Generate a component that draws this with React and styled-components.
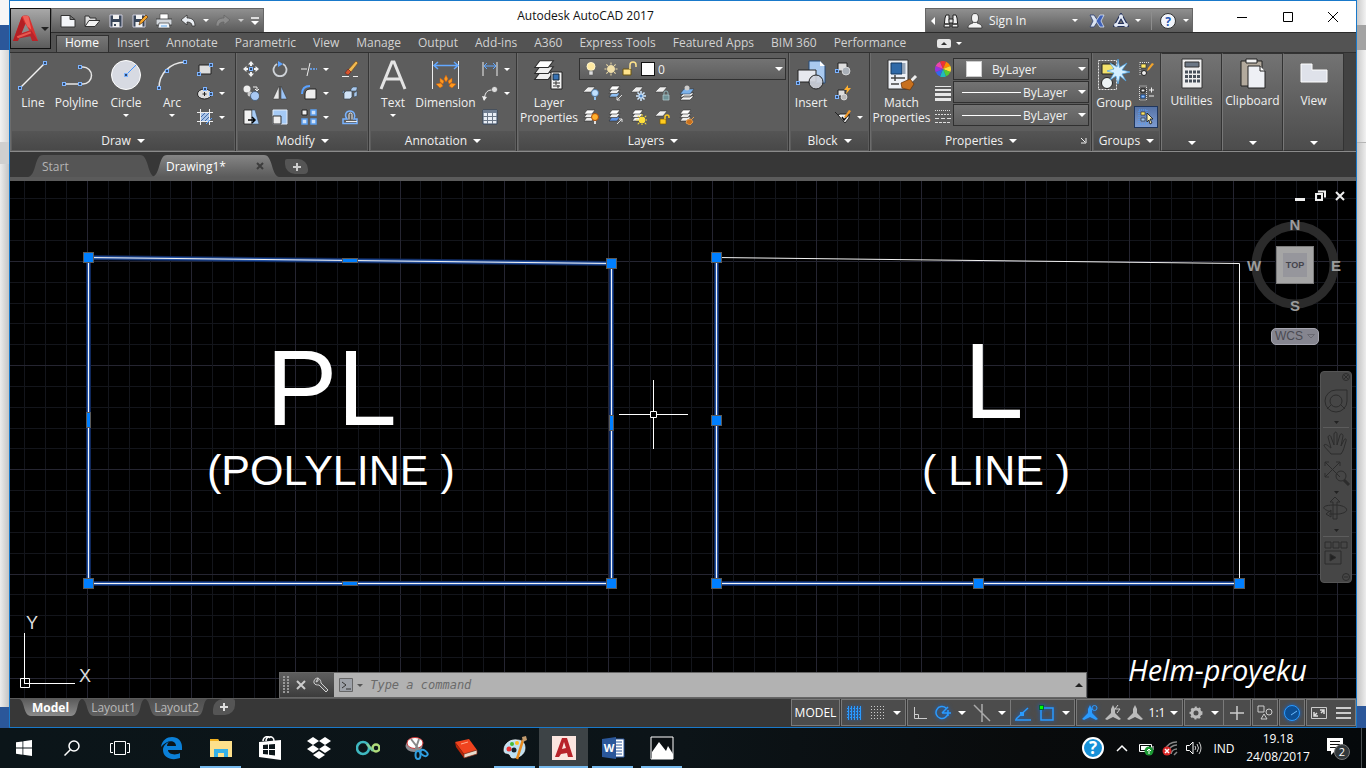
import React, { useState } from 'react';
import styled, { createGlobalStyle } from 'styled-components';

const GlobalStyle = createGlobalStyle`
  * {
    box-sizing: border-box;
  }
  body {
    margin: 0;
    font-family: "Open Sans", "Noto Sans", sans-serif;
    font-size: 12px;
    line-height: 15px;
    overflow: hidden;
  }
  button, input, select {
    font: inherit;
    color: inherit;
    margin: 0;
    padding: 0;
    border: none;
    background: none;
  }
`;

const Screen = styled.div`
  display: flex;
  flex-direction: column;
  height: 100vh;
  min-height: 600px;
`;

const Desktop = styled.div`
  flex: 1;
  display: flex;
  min-height: 0;
`;

/* slice of the word window that is still visible behind */
const Behind = styled.div`
  width: 9px;
  display: flex;
  flex-direction: column;
  background: linear-gradient(${(p) => (p.$right ? 'to left' : 'to right')}, #ececec, #c4c4c4);
`;

const Band = styled.div`
  height: ${(p) => p.$height}px;
  background: ${(p) => p.$color};
`;

const Fill = styled.div`
  flex: 1;
`;

const Window = styled.div`
  flex: 1;
  min-width: 0;
  display: flex;
  flex-direction: column;
  border: 1px solid #1979ca;
  background: #373737;
  color: #f0f0f0;
`;

const TitleBar = styled.div`
  position: relative;
  height: 32px;
  display: flex;
  align-items: flex-end;
  background: #fff;
  border-bottom: 1px solid #2b2b2b;
`;

const AppButton = styled.button`
  position: absolute;
  left: 0;
  top: 7px;
  z-index: 2;
  width: 41px;
  height: 41px;
  display: flex;
  align-items: center;
  justify-content: center;
  gap: 2px;
  border: 1px solid #111;
  background: linear-gradient(#a8a8a8, #5c5c5c);
`;

const Strip = styled.div`
  height: 24px;
  display: flex;
  align-items: center;
  color: #f4f4f4;
  border: 1px solid #666;
  border-bottom: none;
  background: linear-gradient(#909090, #5a5a5a);
`;

const QuickAccess = styled(Strip)`
  margin-left: 41px;
  padding: 0 0 0 4px;
`;

const StripButton = styled.button`
  width: ${(p) => p.$width || 24}px;
  height: 22px;
  display: flex;
  align-items: center;
  justify-content: center;
`;

const Title = styled.div`
  flex: 1;
  height: 31px;
  padding-right: 18px;
  line-height: 30px;
  text-align: center;
  white-space: nowrap;
  color: #111;
`;

const SignIn = styled.button`
  display: flex;
  align-items: center;
  width: 100px;
  padding: 0 9px 0 2px;
`;

const Divider = styled.div`
  width: 1px;
  height: 18px;
  margin: 0 4px 0 10px;
  background: #8d8d8d;
`;

const WindowControls = styled.div`
  width: 163px;
  height: 31px;
  padding-left: 26px;
  display: flex;
`;

const WindowControl = styled.button`
  flex: 1;
  display: flex;
  align-items: center;
  justify-content: center;
`;

const RibbonTabs = styled.div`
  height: 19px;
  display: flex;
  align-items: flex-end;
  padding-left: 46px;
  background: #535353;
`;

const RibbonTab = styled.button`
  height: 17px;
  padding: 0 9px 2px 8px;
  line-height: 14px;
  white-space: nowrap;
  color: ${(p) => (p.$active ? '#fff' : '#d2d2d2')};
  border: 0 solid #303030;
  border-width: ${(p) => (p.$active ? '1px 1px 0' : '1px 0 0')};
  border-color: ${(p) => (p.$active ? '#303030' : 'transparent')};
  background: ${(p) => (p.$active ? 'linear-gradient(#777, #606060)' : 'none')};
`;

const RibbonToggle = styled.button`
  display: flex;
  align-items: center;
  gap: 5px;
  height: 17px;
  margin-left: 22px;
`;

const Ribbon = styled.div`
  height: 100px;
  display: flex;
  border-top: 1px solid #303030;
  border-bottom: 1px solid #8a8a8a;
  background: #424242;
`;

const PanelBox = styled.section`
  width: ${(p) => p.$width}px;
  flex: none;
  display: flex;
  flex-direction: column;
  border-right: 1px solid #363636;
  border-left: 1px solid #6c6c6c;
  background: #5d5d5d;
`;

const PanelBody = styled.div`
  flex: 1;
  display: flex;
  padding: 0 1px;
`;

const PanelTitle = styled.button`
  position: relative;
  height: 19px;
  margin: 0 1px 1px;
  display: flex;
  align-items: center;
  justify-content: center;
  gap: 6px;
  background: linear-gradient(#555, #484848);
`;

const Launcher = styled.span`
  position: absolute;
  right: 2px;
  top: 4px;
`;

const BigButton = styled.button`
  width: ${(p) => p.$width}px;
  flex: none;
  display: flex;
  flex-direction: column;
  align-items: center;
  padding-top: 6px;
  white-space: nowrap;
`;

const BigLabel = styled.span`
  margin: 4px 0;
  white-space: pre-line;
`;

const ToolGrid = styled.div`
  display: grid;
  grid-template-columns: ${(p) => p.$columns};
  grid-auto-rows: 24px;
  align-content: start;
  padding: ${(p) => p.$top ?? 5}px 0 0 ${(p) => p.$left || 0}px;
`;

const Tool = styled.button`
  height: 22px;
  display: flex;
  align-items: center;
  gap: 6px;
  padding: 0 3px;
  border: 1px solid ${(p) => (p.$active ? '#20365c' : 'transparent')};
  background: ${(p) => (p.$active ? 'linear-gradient(#5673a6, #7d9bd0)' : 'none')};
`;

const Stack = styled.div`
  flex: 1;
  display: flex;
  flex-direction: column;
  gap: 1px;
  padding: 5px 1px 0 0;
`;

const Combo = styled.div`
  height: 22px;
  display: flex;
  align-items: center;
  gap: ${(p) => p.$gap || 3}px;
  padding: 0 2px 0 ${(p) => p.$indent || 4}px;
  border: 1px solid #303030;
  background: linear-gradient(#737373, #5e5e5e);
`;

const ComboSelect = styled.select`
  flex: 1;
  min-width: 0;
  appearance: none;
  outline: none;
`;

const Swatch = styled.span`
  width: ${(p) => p.$size}px;
  height: ${(p) => p.$size}px;
  flex: none;
  background: #fff;
  border: 1px solid ${(p) => p.$edge || '#111'};
`;

const LineSample = styled.span`
  width: 59px;
  height: 1px;
  background: #fff;
`;

const SlimPanel = styled.button`
  width: 61px;
  flex: none;
  display: flex;
  flex-direction: column;
  align-items: center;
  padding: 4px 0 5px;
  border: 1px solid #333;
  border-left-color: #777;
  background: linear-gradient(#737373, #4c4c4c);
`;

const SlimLabel = styled.span`
  margin-top: 3px;
  flex: 1;
`;

const FileTabs = styled.div`
  height: 29px;
  display: flex;
  align-items: flex-end;
  padding-left: 18px;
  border-bottom: 4px solid #5b5b5b;
  background: #373737;
`;

const FileTab = styled.div`
  width: 127px;
  height: 22px;
  display: flex;
  align-items: center;
  padding: 0 15px 0 14px;
  color: ${(p) => (p.$active ? '#fff' : '#b4b4b4')};
  background: ${(p) => (p.$active ? 'linear-gradient(#858585, #5b5b5b)' : '#555')};
  clip-path: path("M0 22 C9 20 6 0 15 0 H112 C121 0 119 20 127 22 Z");
  & + & {
    margin-left: -3px;
  }
`;

const FileTabName = styled.button`
  flex: 1;
  text-align: left;
`;

const AddFileTab = styled.button`
  width: 23px;
  height: 15px;
  margin: 0 0 3px 6px;
  display: flex;
  align-items: center;
  justify-content: center;
  background: #555;
  border-radius: 2px 10px 4px 10px;
`;

const Canvas = styled.div`
  position: relative;
  flex: 1;
  min-height: 0;
  overflow: hidden;
  background: #000;
`;

const Drawing = styled.svg`
  position: absolute;
  inset: 0;
  width: 100%;
  height: 100%;
`;

const Ucs = styled.svg`
  position: absolute;
  left: 8px;
  bottom: 9px;
`;

const CanvasControls = styled.div`
  position: absolute;
  top: 7px;
  right: 8px;
  display: flex;
  gap: 4px;
`;

const CanvasControl = styled.button`
  width: 16px;
  height: 16px;
`;

const ViewCube = styled.svg`
  position: absolute;
  top: 34px;
  right: 12px;
  font-family: "Liberation Sans", Arial, sans-serif;
  font-weight: bold;
  text-anchor: middle;
`;

const Wcs = styled.button`
  position: absolute;
  top: 147px;
  right: 37px;
  width: 48px;
  height: 17px;
  display: flex;
  align-items: center;
  justify-content: center;
  gap: 4px;
  border: 1px solid #a6a6b0;
  border-radius: 5px;
  color: #4a4a52;
  font-family: "Liberation Sans", Arial, sans-serif;
  background: #85858f;
`;

const NavBar = styled.div`
  position: absolute;
  top: 190px;
  right: 4px;
  width: 32px;
  height: 212px;
  border: 1px solid #555;
  border-radius: 4px;
  background: #464646;
`;

const Signature = styled.div`
  position: absolute;
  right: 49px;
  bottom: 10px;
  font-style: italic;
  font-size: 29px;
  line-height: 36px;
  color: #fff;
`;

const CommandLine = styled.div`
  position: absolute;
  left: 20%;
  right: 20%;
  bottom: 0;
  height: 26px;
  display: flex;
  border: 1px solid #666;
  background: linear-gradient(#5e5e5e, #3c3c3c);
`;

const CommandTools = styled.div`
  width: 54px;
  display: flex;
  align-items: center;
  gap: 7px;
  padding-left: 3px;
`;

const CommandField = styled.div`
  flex: 1;
  display: flex;
  align-items: center;
  gap: 4px;
  padding: 0 3px 0 5px;
  background: #b2b2b2;
`;

const CommandInput = styled.input`
  flex: 1;
  min-width: 0;
  margin-left: 3px;
  outline: none;
  color: #222;
  font-family: "DejaVu Sans Mono", monospace;
  font-style: italic;
  &::placeholder {
    color: #6a6a6a;
    opacity: 1;
  }
`;

const BottomBar = styled.div`
  height: 29px;
  display: flex;
  justify-content: space-between;
  border-top: 1px solid #5b5b5b;
  background: #373737;
`;

const LayoutTabs = styled.div`
  display: flex;
  padding-left: 9px;
`;

const LayoutTab = styled.button`
  width: 63px;
  height: 17px;
  line-height: 16px;
  color: ${(p) => (p.$active ? '#fff' : '#b8b8b8')};
  font-weight: ${(p) => (p.$active ? 'bold' : 'normal')};
  background: ${(p) => (p.$active ? 'linear-gradient(#5b5b5b, #8c8c8c)' : 'linear-gradient(#505050, #606060)')};
  clip-path: path("M0 0 C6 1 4 17 12 17 H52 C60 17 57 1 63 0 Z");
`;

const AddLayout = styled.button`
  width: 22px;
  height: 16px;
  margin-left: 5px;
  display: flex;
  align-items: center;
  justify-content: center;
  background: #555;
  border-radius: 10px 2px 10px 2px;
`;

const StatusBar = styled.div`
  display: flex;
`;

const StatusGroup = styled.div`
  width: ${(p) => p.$width}px;
  height: 27px;
  display: flex;
  align-items: center;
  justify-content: ${(p) => (p.$single ? 'center' : 'space-between')};
  padding: 0 ${(p) => (p.$single ? 0 : 4)}px;
  border: 1px solid #7a7a7a;
  margin-left: ${(p) => (p.$joined ? -1 : 1)}px;
  background: #4c4c4c;
`;

const StatusButton = styled.button`
  display: flex;
  align-items: center;
  justify-content: center;
  color: #fff;
  filter: ${(p) => (p.$on ? 'drop-shadow(0 0 2px #1064d0)' : 'none')};
`;

const Taskbar = styled.div`
  height: 40px;
  flex: none;
  display: flex;
  color: #fff;
  background: linear-gradient(90deg, #0b1519, #0c1418 50%, #090b0c 75%, #05090b);
`;

const Tasks = styled.div`
  display: flex;
  margin-left: 3px;
`;

const TaskButton = styled.button`
  width: ${(p) => (p.$wide ? 49 : 48)}px;
  display: flex;
  align-items: center;
  justify-content: center;
  position: relative;
  background: ${(p) => (p.$active ? '#3d4346' : 'none')};
  &::after {
    content: "";
    display: ${(p) => (p.$open ? 'block' : 'none')};
    position: absolute;
    bottom: 0;
    left: ${(p) => (p.$active ? 0 : 4)}px;
    right: ${(p) => (p.$active ? 0 : 4)}px;
    height: 2px;
    background: #76b9ed;
  }
`;

const Tray = styled.div`
  margin-left: auto;
  display: flex;
  align-items: center;
  padding-right: 4px;
`;

const TrayButton = styled.button`
  width: ${(p) => p.$width || 24}px;
  height: 40px;
  display: flex;
  align-items: center;
  justify-content: center;
`;

const Clock = styled.button`
  width: 72px;
  line-height: 18px;
  text-align: center;
`;

const ShowDesktop = styled.div`
  width: 1px;
  height: 40px;
  background: #4a4f52;
`;

function Svg({ w = 16, h, box, children }) {
  return (
    <svg width={w} height={h || w} viewBox={box || `0 0 ${w} ${h || w}`} fill="none" style={{ display: 'block', flex: 'none' }}>
      {children}
    </svg>
  );
}

function Arrow({ big, color = '#fff', up }) {
  return (
    <Svg w={big ? 8 : 6} h={big ? 4 : 3} box="0 0 8 4">
      <path d={up ? 'M0 4h8L4 0z' : 'M0 0h8L4 4z'} fill={color} />
    </Svg>
  );
}

const Dot = ({ x, y }) => <rect x={x - 1.5} y={y - 1.5} width="3" height="3" fill="#2f4970" stroke="#7db4ff" />;

const Sheets = ({ blue, x = 0, y = 0 }) => (
  <g transform={`translate(${x} ${y})`} stroke="#2d2d2d" strokeWidth=".6">
    <path d="M1 12l3-4h8l-3 4z" fill={blue || '#eee'} />
    <path d="M1 8.500l3-4h8l-3 4z" fill="#eee" />
    <path d="M1 5l3-4h8l-3 4z" fill="#fff" />
  </g>
);

const OneSheet = () => <path d="M0 7l5-5h7l-4 5z" fill="#eee" stroke="#333" strokeWidth=".5" />;

function Sun({ x, y, r = 3, color = '#ffe27a' }) {
  return (
    <g stroke={color}>
      <circle cx={x} cy={y} r={r} fill={color} />
      {[0, 45, 90, 135, 180, 225, 270, 315].map((a) => (
        <path key={a} d={`M${x} ${y - r - 1}v-2`} transform={`rotate(${a} ${x} ${y})`} />
      ))}
    </g>
  );
}

function ALogo({ size }) {
  return (
    <Svg w={size} box="0 0 28 28">
      <path d="M1 27L10 2c1-2 7-2 8 0l9 25h-6l-2-6-11 2-2 4z" fill="#d9302e" />
      <path d="M10 2l4 8-6 13-2 4H1z" fill="#b31f24" />
      <path d="M14 9l-4 10 8-3z" fill="#8b8b8b" />
      <path d="M11 1h6l3 14-4-3-2-4z" fill="#ee625a" />
      <path d="M7 20l13-4 7 11h-6l-2-5-11 2z" fill="#b9242a" />
      <path d="M5 22l14-5 1 2-14 5z" fill="#e8584f" />
    </Svg>
  );
}

const art = {
  newFile: <path d="M1 2.500h9l5 4V14H1zM10 2.500v4h5" fill="#f3f5f8" stroke="#333" />,
  open: <><path d="M1 13V3h4l1 2h6v3" fill="#ddd" stroke="#333" /><path d="M1 13.500l4-6h11l-5 6z" fill="#f2f2f2" stroke="#333" /></>,
  save: <><path d="M2 2h12v12H2z" fill="#39465a" stroke="#ccd" /><path d="M5 2h6v4H5zM4.500 9h7v5h-7z" fill="#f2f2f2" /><path d="M6 11h2v2H6z" fill="#39465a" /></>,
  saveAs: <><path d="M1 2h12v12H1z" fill="#39465a" stroke="#ccd" /><path d="M4 2h6v4H4zM3.500 9h7v5h-7z" fill="#f2f2f2" /><path d="M7 12l1-4 6-6 2 2-6 6z" fill="#f2a42b" stroke="#5a3410" strokeWidth=".7" /></>,
  print: <><path d="M4 1h8v6H4z" fill="#fff" stroke="#444" strokeWidth=".6" /><path d="M0 6h16v6H0z" fill="#d3d7dc" stroke="#333" strokeWidth=".8" /><path d="M3 10h10l1 5H2z" fill="#eef4fb" stroke="#444" strokeWidth=".7" /><path d="M5 13h6" stroke="#5aa3e8" /></>,
  undo: <path d="M1 7l6-5v3c5 0 8 2 8 8h-3c0-3-2-4-5-4v3z" fill="#e9edf2" stroke="#333" strokeWidth=".8" />,
  redo: <path d="M15 7L9 2v3c-5 0-8 2-8 8h3c0-3 2-4 5-4v3z" fill="#8b8b8b" stroke="#666" strokeWidth=".8" />,
  binoculars: <><path d="M3 2h3v3l1 9H1l1-9zM10 2h3l1 3 1 9H9l1-9z" fill="#f1f1f1" stroke="#222" /><path d="M6 6h4v4H6z" fill="#ddd" stroke="#222" /><path d="M2 11h4M10 11h4" stroke="#222" strokeWidth="1.500" /></>,
  person: <><path d="M1 15c0-4 3-4 5-5V8h4v2c2 1 5 1 5 5z" fill="#f3f3f3" stroke="#333" strokeWidth=".8" /><ellipse cx="8" cy="5" rx="3.500" ry="4.500" fill="#f3f3f3" stroke="#333" strokeWidth=".8" /></>,
  exchange: <><path d="M1 2h4l4 6-4 6H1l3-6z" fill="#dce4f2" stroke="#2c3d70" strokeWidth=".8" /><path d="M15 2h-4L7 8l4 6h4l-3-6z" fill="#3f61b8" stroke="#dce4f2" strokeWidth=".8" /></>,
  a360: <><path d="M8 3l5 9H3z" stroke="#26335c" strokeWidth="4" /><path d="M8 3l5 9H3z" stroke="#e3e9f5" strokeWidth="1.800" /><circle cx="8" cy="3.500" r="2" fill="#e3e9f5" /><circle cx="3" cy="12" r="2" fill="#e3e9f5" /><circle cx="13" cy="12" r="2" fill="#e3e9f5" /></>,
  rectangle: <><path d="M2 4h12v9H2z" fill="#ddd" stroke="#222" /><Dot x={2} y={13} /><Dot x={14} y={4} /></>,
  ellipse: <><ellipse cx="7.500" cy="9" rx="7" ry="5" fill="#ddd" stroke="#222" /><path d="M5.500 9h4M7.500 7v4" stroke="#222" /><Dot x={8} y={4} /><Dot x={14} y={9} /></>,
  hatch: <><path d="M3.500 3.500h9v9h-9z" fill="#a9c4e8" /><path d="M4 8l4-4M4 12l8-8M8 12l4-4" stroke="#446ca8" /><path d="M3.500 0v16M12.500 0v16M0 3.500h16M0 12.500h16" stroke="#eee" /><path d="M9 15l6-6" stroke="#4f9cff" /></>,
  move: <><path d="M8 0l3 3.500H9V5H7V3.500H5zM8 16l3-3.500H9V11H7v1.500H5zM0 8l3.500-3v2H5v2H3.500v2zM16 8l-3.500-3v2H11v2h1.500v2z" fill="#f2f2f2" /><Dot x={8} y={8} /></>,
  rotate: <><path d="M11 3a6.500 6.500 0 1 1-6 0" stroke="#cfd3d8" strokeWidth="1.800" /><path d="M6 0l5 3-5 3z" fill="#5ba2ff" /></>,
  trim: <><path d="M0 8h6" stroke="#eee" /><path d="M9 2L6 15" stroke="#eee" /><path d="M9 8h2M12 8h2M15 8h1" stroke="#69abff" strokeWidth="1.500" /></>,
  erase: <><path d="M14 0l2 2-7 9-3-2z" fill="#f2ba50" stroke="#704716" strokeWidth=".6" /><path d="M6 8l3 3-3 3-3-2z" fill="#db552c" stroke="#622" strokeWidth=".6" /><path d="M0 15.500h7M11 15.500h5" stroke="#eee" /></>,
  copy: <><circle cx="4" cy="4" r="3.500" fill="#eee" /><circle cx="7" cy="9" r="2.500" fill="#ccc" /><circle cx="12" cy="11" r="4.500" fill="#a9c9f4" stroke="#36506f" strokeWidth=".7" /><path d="M10 2h4v3M12 4l2 2 2-2" stroke="#eee" /></>,
  mirror: <><path d="M7 1v13H1z" fill="#e8e8e8" stroke="#333" strokeWidth=".5" /><path d="M9 1v13h6z" fill="#9cc4f6" stroke="#333" strokeWidth=".5" /></>,
  fillet: <><path d="M4 14V9c0-3 2-5 5-5h6v10z" fill="#eee" stroke="#222" /><path d="M1 9c0-5 3-8 8-8" stroke="#5ba2ff" strokeWidth="2" /></>,
  explode: <><path d="M2 8l2-2h6v6l-2 2H2z" fill="#cfe3f8" stroke="#345" strokeWidth=".7" /><path d="M9 4l2-2h4v2l-1 2H9zM12 8l3-2v5l-3 1zM0 8l2-3v3z" fill="#a9c9ee" stroke="#345" strokeWidth=".5" /></>,
  stretch: <><path d="M1 1h8v14H1z" fill="#f2f2f2" stroke="#222" strokeWidth=".8" /><path d="M9 1h3l4 14H9z" fill="#a9cdf6" stroke="#345" strokeWidth=".5" /><path d="M5 11h6M9 8l3 3-3 3" stroke="#000" strokeWidth="1.500" /></>,
  scale: <><path d="M1 1h14v14H1z" fill="#a5caf6" stroke="#e4eefb" /><path d="M1 7h8v8H1z" fill="#eee" stroke="#333" /></>,
  array: <><path d="M1 1h5v5H1z" fill="#eee" stroke="#222" /><path d="M10 1h5v5h-5zM1 10h5v5H1zM10 10h5v5h-5z" fill="#cfe2fa" stroke="#5b9ff0" strokeWidth="1.500" /></>,
  offset: <><path d="M1 14.500h14V10h-3c2-4 0-8-4-8S2 6 5 10H1z" stroke="#78b2ff" strokeWidth="1.500" /><path d="M4 12.500h11M7 10.500V5.500a1.500 1.500 0 0 1 3 0v5" stroke="#eee" /></>,
  linear: <><path d="M1 1v14M15 1v14" stroke="#eee" /><path d="M2 5h12M5 2L2 5l3 3M11 2l3 3-3 3" stroke="#63a8ff" /></>,
  leader: <><path d="M2 15c1-6 2-10 8-10" stroke="#eee" /><path d="M0 11l2 5 3-4z" fill="#eee" /><circle cx="12.500" cy="4.500" r="3" fill="#ddd" stroke="#333" strokeWidth=".5" /></>,
  table: <><path d="M1 1h14v14H1z" fill="#e9eef5" stroke="#33455d" /><path d="M1 1h14v3H1z" fill="#6f7d90" /><path d="M1 7.500h14M1 11.500h14M5.500 4v11M10.500 4v11" stroke="#6b7787" /></>,
  layOff: <><OneSheet /><circle cx="12" cy="8" r="3.500" fill="#bfe0ff" stroke="#3a6ea5" strokeWidth=".7" /><path d="M11 12h2v3h-2z" fill="#8cc0ef" /></>,
  layIsolate: <><Sheets blue="#8fc0f5" x={1} /><path d="M15 10l-5 5M10 12v3h3" stroke="#ddd" /></>,
  layFreeze: <><OneSheet /><path d="M10 6v10M5 11h10M6.500 7.500l7 7M13.500 7.500l-7 7" stroke="#cfe8ff" strokeWidth="1.500" /><circle cx="10" cy="11" r="1.500" fill="#4f86c6" /></>,
  layLock: <><OneSheet /><path d="M8 10h6v5H8z" fill="#6f9297" stroke="#b6cfd3" strokeWidth=".7" /><path d="M9 10V8a2 2 0 0 1 4 0v2" stroke="#8fb2b7" /></>,
  layCurrent: <><path d="M1 15l4-4h10l-4 4zM1 12l4-4h10l-4 4z" fill="#f0f0f0" stroke="#2d2d2d" strokeWidth=".6" /><path d="M1 9l4-5h10l-4 5z" fill="#7db2ea" stroke="#234" strokeWidth=".5" /><circle cx="8" cy="3" r="2.500" fill="#ccc" /></>,
  layOn: <><Sheets /><circle cx="12" cy="8" r="3.500" fill="#ffb02e" stroke="#b14d06" /><path d="M11 12h2v3h-2z" fill="#ddd" /></>,
  layUnisolate: <><Sheets blue="#5d93e6" x={1} /><path d="M10 15l5-5M12 10h3v3" stroke="#ddd" /></>,
  layThaw: <><Sheets /><Sun x={11} y={11} r={3} color="#ffe03a" /></>,
  layUnlock: <><OneSheet /><path d="M5 10h6v5H5z" fill="#ffcb1f" stroke="#805c00" strokeWidth=".7" /><path d="M10 10V8a2 2 0 0 1 4 0v1" stroke="#ffcb1f" strokeWidth="1.500" /></>,
  layMatch: <><Sheets /><path d="M15 8l-3 3M8 11l4-1 2 3-3 3-4-2z" fill="#c8701e" stroke="#e09a4a" /></>,
  createBlock: <><path d="M3 2h9v8H3z" fill="#ddd" stroke="#222" /><circle cx="11" cy="10" r="4" fill="#a9b0b8" stroke="#eee" strokeWidth=".7" /><Dot x={2} y={10} /></>,
  editBlock: <><path d="M3 5h7v6H3z" fill="#ddd" stroke="#222" /><circle cx="9" cy="12" r="3" fill="#bbb" stroke="#eee" strokeWidth=".7" /><Dot x={2} y={12} /><path d="M13 0l-4 5h3l-1 4 5-6h-3z" fill="#ffb02e" /></>,
  editAttr: <><path d="M0 3l3 3" stroke="#222" /><path d="M3 6l7 8 4-5V5H5z" fill="#f3f3f3" stroke="#222" /><path d="M7 8l2 3 5-6" stroke="#111" strokeWidth="1.500" /><path d="M14 1l2 1-5 7-2-1z" fill="#f29a2b" /></>,
  lineweight: <><path d="M0 1.500h16" stroke="#e6e6e6" /><path d="M0 5h16" stroke="#e6e6e6" strokeWidth="2" /><path d="M0 9.500h16" stroke="#e6e6e6" strokeWidth="3" /><path d="M0 14.500h16" stroke="#e6e6e6" strokeWidth="3" /></>,
  linetype: <><path d="M0 1.500h16" stroke="#ddd" strokeDasharray="1 1" /><path d="M0 5.500h16" stroke="#ddd" strokeDasharray="2 1" /><path d="M0 9.500h16" stroke="#ddd" strokeDasharray="4 2" /><path d="M0 13.500h16" stroke="#ddd" strokeDasharray="3 1" /></>,
  ungroup: <><path d="M2 1.500h9M2 1v14" stroke="#ddd" strokeDasharray="1 1" /><path d="M3 3h5v4H3z" fill="#ffe866" stroke="#222" strokeWidth=".6" /><circle cx="6" cy="12" r="2.500" fill="#eee" stroke="#222" /><path d="M14 2l2 1-5 6-2 1 1-3z" fill="#f2a42b" /></>,
  groupEdit: <><path d="M1.500 1h7v14h-7z" stroke="#ddd" strokeDasharray="1 1" /><path d="M3 4h4v3H3z" fill="#eee" stroke="#111" /><path d="M3 10h4v3H3z" fill="#8fc0ff" stroke="#1a4c90" /><path d="M11 5h5M13.500 2.500v5M11 11h5" stroke="#eee" /></>,
  groupSelect: <><path d="M1 1h8v14H1z" stroke="#4fa0ff" strokeDasharray="1 1" /><path d="M3 3h4v3H3z" fill="#ffe866" stroke="#222" strokeWidth=".6" /><path d="M3 9h4v3H3z" fill="#9ec4ee" stroke="#222" strokeWidth=".6" /><path d="M9 4l6 6h-3l2 4-2 1-1-4-2 2z" fill="#fdf3b8" stroke="#111" strokeWidth=".8" /></>,
};

const big = {
  line: <><path d="M3 29L28 4" stroke="#f2f2f2" strokeWidth="1.500" /><Dot x={3} y={29} /><Dot x={28} y={4} /></>,
  polyline: <><path d="M3 25h19a8 8 0 0 0 0-17h-3" stroke="#e6e6e6" strokeWidth="1.500" /><Dot x={3} y={25} /><Dot x={19} y={25} /><Dot x={19} y={8} /></>,
  circle: <><circle cx="16" cy="16" r="14.500" fill="#d7dae2" stroke="#fff" /><path d="M16 16l10-10" stroke="#4796ff" /><Dot x={16} y={16} /></>,
  arc: <><path d="M3 29C3 15 13 4 29 3" stroke="#e6e6e6" strokeWidth="1.500" /><Dot x={3} y={29} /><Dot x={11} y={12} /><Dot x={29} y={3} /></>,
  dimension: <><path d="M2.500 2v28M28.500 2v28" stroke="#eee" /><path d="M4 6.500h24M8 3L4 6.500 8 10M24 3l4 3.500-4 3.500" stroke="#63a8ff" strokeWidth="1.500" /><path d="M16 16l2 4-2 3-2-3zM10 19l4 3-1 3-3-2zM22 19l-4 3 1 3 3-2zM6 25l5-1 2 3-3 2zM26 25l-5-1-2 3 3 2z" fill="#ff9a1f" stroke="#c9590a" strokeWidth=".5" /></>,
  layers: <><g transform="scale(1.700)"><Sheets x={0} /></g><path d="M18 13h11v17H18z" fill="#f3f3f3" stroke="#222" /><path d="M20 15h6v6h-6z" fill="#3873b5" stroke="#123" /><path d="M20 24h7M20 27h7M23 22v4M25 26v3" stroke="#333" /></>,
  insert: <><path d="M14 2h11l5 5v17H14z" fill="#a9c9ef" stroke="#274a77" /><path d="M25 2v5h5" fill="#fff" /><path d="M3 11h18v12H3z" fill="#e6e8ee" stroke="#222" /><circle cx="21" cy="23" r="7" fill="#ced2da" stroke="#222" fillOpacity=".9" /><Dot x={3} y={24} /></>,
  match: <><path d="M2 1h20v29H2z" fill="#eef1f6" stroke="#333" /><path d="M5 4h11v11H5z" fill="#2f69a8" stroke="#16395f" /><path d="M18 4v11" stroke="#98a6b8" strokeWidth="3" /><path d="M5 19h14M5 25h8M9 16v6" stroke="#444" strokeWidth="1.500" /><path d="M30 17l-6 6" stroke="#eee" strokeWidth="3" /><path d="M15 24l9-4 4 5-4 6-8-2z" fill="#c8701e" stroke="#6d390c" strokeWidth=".8" /></>,
  group: <><path d="M.5 1.500h18v29H.5z" stroke="#e3e3e3" strokeDasharray="2 1" /><path d="M4 5h12v10H4z" fill="#f3e26c" stroke="#222" /><circle cx="9" cy="24" r="5.500" fill="#eef4f6" stroke="#222" /><path d="M20 0l1.500 8.500L29 4l-5 7 8 2-8 2 4 7-6-5-2 8-2-8-6 4 4-7-7-2 7-2-4-6 7 4z" fill="#d4efff" stroke="#4ba4e6" strokeWidth=".7" /></>,
  utilities: <><path d="M6 1h20v29H6z" fill="#eee" stroke="#333" /><path d="M9 4h14v5H9z" fill="#6b7785" stroke="#333" /><path d="M9 14h15M9 18.500h15M9 23h15" stroke="#48505a" strokeWidth="3" strokeDasharray="3 1" /></>,
  clipboard: <><path d="M4 3h21v25H4z" fill="#b3aa9d" stroke="#222" /><path d="M9 1h11v4H9z" fill="#f2f2f2" stroke="#222" /><path d="M11 8h12l5 5v17H11z" fill="#eef0f5" stroke="#222" /><path d="M23 8v5h5" fill="#fff" stroke="#222" /></>,
  view: <path d="M3 6h11v6h15v12H3z" fill="#dfe2ea" stroke="#fff" />,
};

function BigTool({ name, label, width, arrow }) {
  return (
    <BigButton $width={width}>
      {name === 'text' ? (
        <Svg w={32}>
          <path d="M4 30L15 3h2l11 27M9 20h14" stroke="#e4e4e4" strokeWidth="3" />
        </Svg>
      ) : (
        <Svg w={32}>{big[name]}</Svg>
      )}
      <BigLabel>{label}</BigLabel>
      {arrow && <Arrow />}
    </BigButton>
  );
}

function SmallTool({ name, arrow, active }) {
  return (
    <Tool aria-label={name} $active={active}>
      <Svg>{art[name]}</Svg>
      {arrow && <Arrow />}
    </Tool>
  );
}

function Panel({ title, width, launcher, children }) {
  return (
    <PanelBox $width={width}>
      <PanelBody>{children}</PanelBody>
      <PanelTitle>
        {title}
        <Arrow big />
        {launcher && (
          <Launcher>
            <Svg w={8} h={12}><path d="M1 3l4 4M6 3v5H1" stroke="#eee" /></Svg>
          </Launcher>
        )}
      </PanelTitle>
    </PanelBox>
  );
}

const ribbonTabs = [
  'Home', 'Insert', 'Annotate', 'Parametric', 'View', 'Manage', 'Output', 'Add-ins',
  'A360', 'Express Tools', 'Featured Apps', 'BIM 360', 'Performance',
];

const colors = ['#e33', '#f80', '#fd3', '#5c3', '#2bb', '#36e', '#93d', '#e4a'];

function Header() {
  return (
    <TitleBar>
      <AppButton aria-label="Application menu">
        <ALogo size={27} />
        <Arrow big color="#222" />
      </AppButton>
      <QuickAccess>
        {['newFile', 'open', 'save', 'saveAs', 'print', 'undo'].map((n) => (
          <StripButton key={n} aria-label={n}><Svg>{art[n]}</Svg></StripButton>
        ))}
        <StripButton $width={11} aria-label="Undo list"><Arrow /></StripButton>
        <StripButton aria-label="redo"><Svg>{art.redo}</Svg></StripButton>
        <StripButton $width={12} aria-label="Redo list"><Arrow color="#ccc" /></StripButton>
        <StripButton $width={16} aria-label="Customize">
          <Svg w={8} h={8}><path d="M0 1h8" stroke="#fff" strokeWidth="1.500" /><path d="M0 4h8L4 8z" fill="#fff" /></Svg>
        </StripButton>
      </QuickAccess>
      <Title>Autodesk AutoCAD 2017</Title>
      <Strip>
        <StripButton $width={13} aria-label="Collapse"><Svg w={4} h={8}><path d="M4 0v8L0 4z" fill="#fff" /></Svg></StripButton>
        <StripButton aria-label="Search"><Svg>{art.binoculars}</Svg></StripButton>
        <StripButton aria-label="User"><Svg>{art.person}</Svg></StripButton>
        <SignIn>Sign In<Fill /><Arrow /></SignIn>
        <StripButton $width={20} aria-label="Exchange"><Svg>{art.exchange}</Svg></StripButton>
        <StripButton $width={28} aria-label="A360"><Svg>{art.a360}</Svg></StripButton>
        <Arrow />
        <Divider />
        <StripButton $width={24} aria-label="Help">
          <Svg w={16}>
            <circle cx="8" cy="8" r="7.500" fill="#f2f5fb" stroke="#333" />
            <text x="8" y="12.500" fontSize="12" fontWeight="bold" fill="#2456b4" textAnchor="middle">?</text>
          </Svg>
        </StripButton>
        <StripButton $width={12} aria-label="Help list"><Arrow /></StripButton>
      </Strip>
      <WindowControls>
        <WindowControl aria-label="Minimize"><Svg w={10}><path d="M0 5.500h10" stroke="#000" /></Svg></WindowControl>
        <WindowControl aria-label="Maximize"><Svg w={10}><path d="M.5.5h9v9h-9z" stroke="#000" /></Svg></WindowControl>
        <WindowControl aria-label="Close"><Svg w={10}><path d="M0 0l10 10M10 0L0 10" stroke="#000" /></Svg></WindowControl>
      </WindowControls>
    </TitleBar>
  );
}

function PropertyLine({ label }) {
  return (
    <Combo $indent={8} $gap={2}>
      <LineSample />
      <ComboSelect aria-label={label}><option>ByLayer</option></ComboSelect>
      <Arrow big />
    </Combo>
  );
}

function RibbonPanels() {
  return (
    <Ribbon>
      <Panel title="Draw" width={226}>
        <BigTool name="line" label="Line" width={42} />
        <BigTool name="polyline" label="Polyline" width={45} />
        <BigTool name="circle" label="Circle" width={54} arrow />
        <BigTool name="arc" label="Arc" width={38} arrow />
        <ToolGrid $columns="34px" $left={2}>
          <SmallTool name="rectangle" arrow />
          <SmallTool name="ellipse" arrow />
          <SmallTool name="hatch" arrow />
        </ToolGrid>
      </Panel>
      <Panel title="Modify" width={133}>
        <ToolGrid $columns="29px 29px 41px 24px" $left={1}>
          <SmallTool name="move" />
          <SmallTool name="rotate" />
          <SmallTool name="trim" arrow />
          <SmallTool name="erase" />
          <SmallTool name="copy" />
          <SmallTool name="mirror" />
          <SmallTool name="fillet" arrow />
          <SmallTool name="explode" />
          <SmallTool name="stretch" />
          <SmallTool name="scale" />
          <SmallTool name="array" arrow />
          <SmallTool name="offset" />
        </ToolGrid>
      </Panel>
      <Panel title="Annotation" width={148}>
        <BigTool name="text" label="Text" width={44} arrow />
        <BigTool name="dimension" label="Dimension" width={61} />
        <ToolGrid $columns="34px" $left={2}>
          <SmallTool name="linear" arrow />
          <SmallTool name="leader" arrow />
          <SmallTool name="table" />
        </ToolGrid>
      </Panel>
      <Panel title="Layers" width={272}>
        <BigTool name="layers" label={'Layer\nProperties'} width={60} />
        <Stack>
          <Combo>
            <Svg w={16}><circle cx="7" cy="5.500" r="4" fill="#ffe9a0" stroke="#fff6d0" /><path d="M5 10h4v4H5z" fill="#ddd" stroke="#555" strokeWidth=".5" /></Svg>
            <Svg w={16}><Sun x={8} y={8} r={3.5} color="#f1dfa8" /></Svg>
            <Svg w={16}><path d="M1 8h8v6H1z" fill="#ffe38c" stroke="#6b5410" /><path d="M8 8V4a3 3 0 0 1 6 0v2" stroke="#ffe38c" strokeWidth="1.500" /></Svg>
            <Swatch $size={14} />
            <ComboSelect aria-label="Layer"><option>0</option></ComboSelect>
            <Arrow big />
          </Combo>
          <ToolGrid $columns="repeat(5, 24px)" $top={1}>
            <SmallTool name="layOff" />
            <SmallTool name="layIsolate" />
            <SmallTool name="layFreeze" />
            <SmallTool name="layLock" />
            <SmallTool name="layCurrent" />
            <SmallTool name="layOn" />
            <SmallTool name="layUnisolate" />
            <SmallTool name="layThaw" />
            <SmallTool name="layUnlock" />
            <SmallTool name="layMatch" />
          </ToolGrid>
        </Stack>
      </Panel>
      <Panel title="Block" width={81}>
        <BigTool name="insert" label="Insert" width={40} />
        <ToolGrid $columns="34px">
          <SmallTool name="createBlock" />
          <SmallTool name="editBlock" />
          <SmallTool name="editAttr" arrow />
        </ToolGrid>
      </Panel>
      <Panel title="Properties" width={222} launcher>
        <BigTool name="match" label={'Match\nProperties'} width={59} />
        <ToolGrid $columns="22px">
          <Tool aria-label="Color">
            <Svg w={16}>
              {colors.map((c, i) => (
                <path key={c} d="M8 8L5 0.600A8 8 0 0 1 11 .6z" fill={c} transform={`rotate(${i * 45} 8 8)`} />
              ))}
            </Svg>
          </Tool>
          <SmallTool name="lineweight" />
          <SmallTool name="linetype" />
        </ToolGrid>
        <Stack>
          <Combo $indent={12} $gap={10}>
            <Swatch $size={16} $edge="#ccc" />
            <ComboSelect aria-label="Object color"><option>ByLayer</option></ComboSelect>
            <Arrow big />
          </Combo>
          <PropertyLine label="Lineweight" />
          <PropertyLine label="Linetype" />
        </Stack>
      </Panel>
      <Panel title="Groups" width={69}>
        <BigTool name="group" label="Group" width={40} />
        <ToolGrid $columns="24px">
          <SmallTool name="ungroup" />
          <SmallTool name="groupEdit" />
          <SmallTool name="groupSelect" active />
        </ToolGrid>
      </Panel>
      {['Utilities', 'Clipboard', 'View'].map((name) => (
        <SlimPanel key={name}>
          <Svg w={32}>{big[name.toLowerCase()]}</Svg>
          <SlimLabel>{name}</SlimLabel>
          <Arrow big />
        </SlimPanel>
      ))}
    </Ribbon>
  );
}

// grid spacing is 104.2px for a major cell, 5 minor cells in each
const STEP = 20.84;

function gridLines() {
  const lines = [];
  for (let i = -3; i < 120; i++) {
    const x = Math.floor(77.5 + i * STEP) + 0.5;
    lines.push(<path key={`v${i}`} d={`M${x} 0V2000`} stroke={i % 5 === 0 ? '#252531' : '#13151b'} />);
    const y = Math.floor(80.4 + i * STEP) + 0.5;
    lines.push(<path key={`h${i}`} d={`M0 ${y}H3000`} stroke={i % 5 === 0 ? '#252531' : '#13151b'} />);
  }
  return lines;
}

const grips = [
  [78, 76], [601, 82], [601, 402], [78, 402],
  [706, 76], [706, 239], [706, 402], [968, 402], [1229, 402],
];

function Model() {
  return (
    <Drawing fontFamily="Liberation Sans, Arial, sans-serif" fill="#fff">
      {gridLines()}
      <g fill="none" transform="translate(.5 .5)">
        <path d="M78 76L601 82V402H78zM706 76V402H1229" stroke="#0f2759" strokeWidth="5" />
        <path d="M78 76L601 82V402H78zM706 76V402H1229" stroke="#23509f" strokeWidth="3" />
        <path d="M78 76L601 82V402H78zM706 76V402H1229M706 76L1229 82V402" stroke="#f4f4f4" />
      </g>
      <g fill="#007fff" stroke="#5a5a5a">
        {grips.map(([x, y]) => <rect key={`${x}-${y}`} x={x - 4.5} y={y - 4.5} width="10" height="10" />)}
        <rect x="332.500" y="77.500" width="15" height="4" />
        <rect x="332.500" y="400.500" width="15" height="4" />
        <rect x="76.500" y="231.500" width="4" height="15" />
        <rect x="599.500" y="234.500" width="4" height="15" />
      </g>
      <text x="256" y="244" fontSize="107">PL</text>
      <text x="197" y="304" fontSize="43">(POLYLINE )</text>
      <text x="954" y="237" fontSize="107">L</text>
      <text x="912" y="304" fontSize="43">( LINE )</text>
      <path d="M609 233.500h31M647 233.500h31M643.500 199v31M643.500 237v31M640.500 230.500h6v6h-6z" stroke="#fff" fill="none" />
    </Drawing>
  );
}

function Navigation() {
  return (
    <NavBar>
      <Svg w={30} h={210}>
        <g stroke="#2c2c2c">
          <circle cx="25" cy="5" r="3.500" /><path d="M23 3l4 4M27 3l-4 4" />
          <path d="M15 18h11v11a11 11 0 1 1-11-11z" /><circle cx="15" cy="29" r="6" /><path d="M10 33l-4 4M20 33l4 4" />
          <path d="M2 55.500h26M2 164.500h26" stroke="#5c5c5c" />
          <path d="M10 82c-3-4-7-7-7-9 2-2 5 2 7 3l-3-11c1-3 3-1 3 0l3 8V62c1-3 3-2 3 0v11l3-10c1-2 3-1 3 1l-2 10 3-6c1-2 3-1 2 1-2 6-2 9-5 13z" />
          <path d="M4 90l15 15M19 90L4 105M4 94v-4h4M15 90h4v4M4 101v4h4" /><circle cx="20" cy="104" r="5" /><path d="M23 108l5 5" strokeWidth="3" />
          <path d="M12 147v-17H9l5-5 5 5h-3v17zM10 140C-2 136 2 133 14 133s17 7 4 9l-10 0M10 138l-5 4 5 3z" />
          <path d="M4 170h6v6H4zM12 170h6v6h-6zM20 170h6v6h-6zM4 179h16v13H4z" /><path d="M9 182v7l6-3.500z" fill="#222" />
          <circle cx="25" cy="205" r="3.500" /><path d="M23 205h4" />
        </g>
        <path d="M13 49h5l-2.500 3zM13 119h5l-2.500 3zM13 157h5l-2.500 3z" fill="#222" />
      </Svg>
    </NavBar>
  );
}

function Workspace() {
  const [command, setCommand] = useState('');

  return (
    <Canvas>
      <Model />
      <Ucs width="90" height="80" fill="none" fontFamily="Liberation Sans, Arial, sans-serif">
        <path d="M2.500 69.500h9v9h-9zM6.500 24v50M6 74.500h51" stroke="#fff" />
        <text x="8" y="20" fontSize="18" fill="#ddd">Y</text>
        <text x="61" y="73" fontSize="18" fill="#ddd">X</text>
      </Ucs>
      <CanvasControls>
        <CanvasControl aria-label="Minimize drawing"><Svg><path d="M3 11.500h10" stroke="#eee" strokeWidth="3" /></Svg></CanvasControl>
        <CanvasControl aria-label="Restore drawing"><Svg><path d="M4 6h6v6H4zM6 3.500h7v6" stroke="#eee" strokeWidth="2" /></Svg></CanvasControl>
        <CanvasControl aria-label="Close drawing"><Svg><path d="M4 4l8 8M12 4l-8 8" stroke="#eee" strokeWidth="2" /></Svg></CanvasControl>
      </CanvasControls>
      <ViewCube width="98" height="100" fill="#9c9c9c" fontSize="15">
        <circle cx="49" cy="50" r="39" fill="none" stroke="#2b2b2b" strokeWidth="9" />
        <rect x="30.500" y="31.500" width="37" height="37" fill="#a5a5a5" stroke="#7c7c7c" />
        <rect x="37" y="38" width="24" height="24" fill="#96969c" />
        <text x="49" y="53" fontSize="9" fill="#44444c">TOP</text>
        <text x="49" y="15">N</text>
        <text x="49" y="96">S</text>
        <text x="8" y="56">W</text>
        <text x="90" y="56">E</text>
      </ViewCube>
      <Wcs>
        WCS
        <Svg w={8} h={5}><path d="M.5.5h7L4 4z" stroke="#6a6a72" /></Svg>
      </Wcs>
      <Navigation />
      <Signature>Helm-proyeku</Signature>
      <CommandLine>
        <CommandTools>
          <Svg w={6} h={18}><path d="M1 0v18M5 0v18" stroke="#999" strokeWidth="2" strokeDasharray="2 1" /></Svg>
          <Svg w={10}><path d="M1 1l8 8M9 1L1 9" stroke="#ccc" strokeWidth="2" /></Svg>
          <Svg w={16}><path d="M5 1a4 4 0 0 0-4 5c1 2 3 2 5 2l7 7 2-2-7-7c0-2-1-4-3-5v3l-2 1z" fill="#555" stroke="#d0d0d0" /></Svg>
        </CommandTools>
        <CommandField>
          <Svg w={14}><path d="M.5.5h13v13H.5z" fill="#9da1a8" stroke="#666" /><path d="M3 4l4 3-4 3M7 11h5" stroke="#333" /></Svg>
          <Arrow color="#555" />
          <CommandInput
            aria-label="Command"
            placeholder="Type a command"
            value={command}
            onChange={(e) => setCommand(e.target.value)}
          />
          <Arrow big up color="#222" />
        </CommandField>
      </CommandLine>
    </Canvas>
  );
}

const BLUE = '#2a9bff';

const Figure = ({ color, children }) => (
  <Svg w={18}>
    <path d="M9 1l2 4v4l6 6-2 1-6-3-6 3-2-1 6-6V5z" fill={color} />
    {children}
  </Svg>
);

function Bottom() {
  return (
    <BottomBar>
      <LayoutTabs>
        <LayoutTab $active>Model</LayoutTab>
        <LayoutTab>Layout1</LayoutTab>
        <LayoutTab>Layout2</LayoutTab>
        <AddLayout aria-label="New layout"><Svg w={8}><path d="M0 4h8M4 0v8" stroke="#ddd" strokeWidth="2" /></Svg></AddLayout>
      </LayoutTabs>
      <StatusBar>
        <StatusGroup $width={49} $single><StatusButton>MODEL</StatusButton></StatusGroup>
        <StatusGroup $width={65}>
          <StatusButton $on aria-label="Grid"><Svg w={16}><path d="M2.500 1v14M5.500 1v14M8.500 1v14M11.500 1v14M14.500 1v14" stroke={BLUE} /><path d="M1 3.500h14M1 6.500h14M1 9.500h14M1 12.500h14" stroke={BLUE} strokeDasharray="2 1" /></Svg></StatusButton>
          <StatusButton aria-label="Snap"><Svg w={16}><path d="M1 1.500h14M1 4.500h14M1 7.500h14M1 10.500h14M1 13.500h14" stroke="#ccc" strokeDasharray="1 2" /></Svg></StatusButton>
          <StatusButton aria-label="Snap options"><Arrow big /></StatusButton>
        </StatusGroup>
        <StatusGroup $width={104}>
          <StatusButton aria-label="Ortho"><Svg w={16}><path d="M2.500 2v11.500H15M2.500 9.500h4v4" stroke="#ccc" /></Svg></StatusButton>
          <StatusButton $on aria-label="Polar"><Svg w={16}><path d="M13 8a6 6 0 1 1-2-5M7 8h9M7 8l6-6M13 5v6" stroke={BLUE} strokeWidth="1.500" /></Svg></StatusButton>
          <StatusButton aria-label="Polar options"><Arrow big /></StatusButton>
          <StatusButton aria-label="Isodraft"><Svg w={18}><path d="M9 0v18M1 1l16 16" stroke="#aaa" strokeWidth="1.500" /></Svg></StatusButton>
          <StatusButton aria-label="Isodraft options"><Arrow big /></StatusButton>
        </StatusGroup>
        <StatusGroup $width={65} $joined>
          <StatusButton $on aria-label="Tracking"><Svg w={16}><path d="M0 15h16M1 14L13 3" stroke={BLUE} strokeWidth="1.500" /><rect x="5" y="7" width="4" height="4" fill={BLUE} /></Svg></StatusButton>
          <StatusButton $on aria-label="Object snap"><Svg w={16}><path d="M2 3h12v12H2z" stroke={BLUE} strokeWidth="1.500" /><rect x=".5" y=".5" width="4" height="4" fill="#0f0" stroke="#063" /></Svg></StatusButton>
          <StatusButton aria-label="Snap modes"><Arrow big /></StatusButton>
        </StatusGroup>
        <StatusGroup $width={107}>
          <StatusButton $on aria-label="Annotations"><Figure color={BLUE}><circle cx="13.500" cy="4" r="2.500" stroke={BLUE} /></Figure></StatusButton>
          <StatusButton aria-label="Auto scale"><Figure color="#bbb"><path d="M14 1l-3 4h5l-3 4" stroke="#ccc" /></Figure></StatusButton>
          <StatusButton aria-label="Annotation scale"><Figure color="#bbb" /></StatusButton>
          <StatusButton>1:1</StatusButton>
          <Arrow big />
        </StatusGroup>
        <StatusGroup $width={40}>
          <StatusButton aria-label="Workspace">
            <Svg w={14}><circle cx="7" cy="7" r="4" stroke="#bbb" strokeWidth="3" /><circle cx="7" cy="7" r="5.500" stroke="#bbb" strokeWidth="2" strokeDasharray="2 2" /></Svg>
          </StatusButton>
          <Arrow big />
        </StatusGroup>
        <StatusGroup $width={28} $joined $single>
          <StatusButton aria-label="Monitor"><Svg w={14}><path d="M0 7h14M7 0v14" stroke="#ccc" strokeWidth="1.500" /></Svg></StatusButton>
        </StatusGroup>
        <StatusGroup $width={26} $single>
          <StatusButton aria-label="Isolate"><Svg w={16}><path d="M1 1h6v6H1zM4 14l3-5 3 5z" stroke="#ccc" /><circle cx="12" cy="7" r="3" stroke="#ccc" /></Svg></StatusButton>
        </StatusGroup>
        <StatusGroup $width={26} $single>
          <StatusButton $on aria-label="Hardware"><Svg w={18}><circle cx="9" cy="9" r="7.500" fill="#0d4f94" stroke={BLUE} /><path d="M8 11l6-4" stroke="#6cbcff" /></Svg></StatusButton>
        </StatusGroup>
        <StatusGroup $width={50}>
          <StatusButton aria-label="Clean screen"><Svg w={16} h={14}><path d="M.5 1.500h15v11H.5z" stroke="#ccc" /><path d="M9 4h4v4M7 10H3V6M13 4l-3 3M3 10l3-3" stroke="#ddd" strokeWidth="1.500" /></Svg></StatusButton>
          <StatusButton aria-label="Customization"><Svg w={15} h={14}><path d="M0 2h15M0 7h15M0 12h15" stroke="#ccc" strokeWidth="2" /></Svg></StatusButton>
        </StatusGroup>
      </StatusBar>
    </BottomBar>
  );
}

const tasks = [
  { name: 'Edge', art: <path d="M1 11C2 4 7 1 12 1c6 0 10 4 10 10v3H8c0 4 7 6 12 3v5c-8 3-17 0-17-8 0-4 3-7 6-8-1 1-2 2-2 4h9c0-6-9-7-15 1z" fill="#0b80d8" /> },
  { name: 'Explorer', open: true, art: <><path d="M1 3h8l1 2h13v16H1z" fill="#fde08b" /><path d="M1 3h8l1 2H1z" fill="#f0b020" /><path d="M5 21v-8h14v8h-4v-4H9v4z" fill="#35b1e8" /></> },
  { name: 'Store', art: <><path d="M1 6l22-2v20L1 21z" fill="#fff" /><path d="M8 5c0-5 8-6 8 0M5 5c0-4 5-6 7-3" stroke="#fff" strokeWidth="1.500" /><path d="M5 9l5-.5v4.500H5zM11 8.500l6-.5v5h-6zM5 14h5v4.500L5 18zM11 14h6v5.500l-6-.7z" fill="#0c161a" /></> },
  { name: 'Dropbox', art: <path d="M6 1l6 4-6 4-6-4zM18 1l6 4-6 4-6-4zM6 9l6 4-6 4-6-4zM18 9l6 4-6 4-6-4zM12 15l6 4-6 4-6-4z" fill="#fff" /> },
  { name: 'Sync', art: <><circle cx="7" cy="12" r="6" stroke="#3fb8c0" strokeWidth="2.500" /><circle cx="20" cy="12" r="3.500" stroke="#b0dc7a" strokeWidth="2.500" /><path d="M11 8l6 7" stroke="#7fd0a0" strokeWidth="2.500" /></> },
  { name: 'Snipping tool', art: <><ellipse cx="9" cy="10" rx="8.500" ry="6" fill="#8d8d93" /><ellipse cx="10" cy="7" rx="8" ry="5.500" fill="#fff" stroke="#c33" /><path d="M6 3l10 13M14 3L10 15" stroke="#888" strokeWidth="2" /><ellipse cx="19" cy="17" rx="4" ry="2.500" stroke="#2f9ee0" strokeWidth="2" transform="rotate(35 19 17)" /><ellipse cx="13" cy="19" rx="2.500" ry="4" stroke="#2f9ee0" strokeWidth="2" /></> },
  { name: 'Book', art: <><path d="M1 6l14-3 8 11-13 4z" fill="#f0431e" /><path d="M1 6l9 12v4L2 11z" fill="#b52508" /><path d="M10 18l13-4v4l-13 4z" fill="#e7dccd" stroke="#8b2a12" strokeWidth=".7" /><path d="M7 8l7-2" stroke="#ffae90" /></> },
  { name: 'Paint', open: true, art: <><path d="M1 14C1 7 8 3 14 4c6 0 8 4 8 8 0 7-7 10-12 10-3 0-2-3-4-4s-5 0-5-4z" fill="#bde0f3" stroke="#fff" strokeWidth=".7" /><circle cx="6" cy="13" r="2.500" fill="#e33" /><circle cx="9" cy="8" r="2" fill="#4b3" /><circle cx="14" cy="7" r="2" fill="#fb2" /><circle cx="11" cy="14" r="2.500" fill="#15202a" /><path d="M20 4L14 23" stroke="#e88a1f" strokeWidth="2.500" /><path d="M19 1l4-1 1 4-4 2z" fill="#c39b6e" /></> },
  { name: 'AutoCAD', open: true, active: true },
  { name: 'Word', open: true, art: <><path d="M11 3h12v18H11z" fill="#fff" stroke="#2b579a" /><path d="M14 6h7M14 9h7M14 12h7M14 15h7M14 18h7" stroke="#2b579a" /><path d="M1 3l14-2v22L1 21z" fill="#2b579a" /><text x="8" y="16" fontSize="11" fontWeight="bold" fill="#fff" textAnchor="middle">W</text></> },
  { name: 'Photos', open: true, art: <><path d="M1 1h22v22H1z" fill="#0a0f12" stroke="#fff" /><path d="M2 16l7-10 7 9 2-5 5 8v5H2z" fill="#fff" /></> },
];

function SystemBar() {
  return (
    <Taskbar>
      <TaskButton aria-label="Start"><Svg w={16}><path d="M0 2.300l6.500-.9v6.200H0zM7.300 1.300L16 0v7.600H7.300zM0 8.400h6.500v6.300L0 13.800zM7.300 8.400H16V16l-8.700-1.200z" fill="#fff" /></Svg></TaskButton>
      <TaskButton aria-label="Search"><Svg w={16}><circle cx="10" cy="6" r="5" stroke="#fff" strokeWidth="1.500" /><path d="M6.500 9.500L.5 15.500" stroke="#fff" strokeWidth="1.500" /></Svg></TaskButton>
      <TaskButton aria-label="Task view"><Svg w={20} h={16}><path d="M4.500 1.500h11v13h-11zM3 3.500H.5v9H3M17 3.500h2.500v9H17" stroke="#fff" /></Svg></TaskButton>
      <Tasks>
        {tasks.map((task) => (
          <TaskButton key={task.name} $wide $open={task.open} $active={task.active} aria-label={task.name}>
            {task.art ? (
              <Svg w={24}>{task.art}</Svg>
            ) : (
              <Svg w={24}>
                <path d="M0 0h24v24H0z" fill="#fbe5df" />
                <path d="M3 21L10 2h5l6 19h-5l-1-4-6 1-2 3zM10 13l4-1-2-6z" fill="#b8232a" fillRule="evenodd" />
              </Svg>
            )}
          </TaskButton>
        ))}
      </Tasks>
      <Tray>
        <TrayButton $width={34} aria-label="Help">
          <Svg w={22}><circle cx="11" cy="11" r="10" fill="#1690d8" stroke="#fff" strokeWidth="2" /><text x="11" y="17" fontSize="17" fontWeight="bold" fill="#fff" textAnchor="middle">?</text></Svg>
        </TrayButton>
        <TrayButton aria-label="Hidden icons"><Svg w={12} h={8}><path d="M1 7l5-5 5 5" stroke="#fff" strokeWidth="1.500" /></Svg></TrayButton>
        <TrayButton aria-label="Battery"><Svg w={16}><path d="M1.500 4.500h12v7h-12zM15 6v4" stroke="#fff" /><path d="M3 6h8v4H3z" fill="#fff" /><circle cx="11" cy="11" r="4.500" fill="#1c9a34" /><path d="M11 9v5M9 11l2-2 2 2" stroke="#fff" /></Svg></TrayButton>
        <TrayButton aria-label="Network"><Svg w={16}><path d="M3 10A12 12 0 0 1 15 2M6 12a9 9 0 0 1 9-7M9 14a6 6 0 0 1 6-5M12 15l3-3" stroke="#888" strokeWidth="1.500" /><circle cx="5" cy="11" r="4.500" fill="#d92727" /><path d="M3 9l4 4M7 9l-4 4" stroke="#fff" strokeWidth="1.500" /></Svg></TrayButton>
        <TrayButton aria-label="Volume"><Svg w={16}><path d="M.5 5.500h3L7 2v12l-3.500-3.500h-3z" stroke="#fff" /><path d="M9 6q1.500 2 0 4M11 4q3 4 0 8M13 2q4 6 0 12" stroke="#ccc" /></Svg></TrayButton>
        <TrayButton $width={36}>IND</TrayButton>
        <Clock>19.18<br />24/08/2017</Clock>
        <TrayButton $width={47} aria-label="Notifications">
          <Svg w={24}>
            <path d="M1 2h16v13H9l-4 4v-4H1z" fill="#fff" /><path d="M4 5.500h10M4 8.500h10M4 11.500h6" stroke="#111" />
            <circle cx="16" cy="16" r="7.500" fill="#32383b" stroke="#777" />
            <text x="16" y="20" fontSize="11" fill="#fff" textAnchor="middle">2</text>
          </Svg>
        </TrayButton>
        <ShowDesktop />
      </Tray>
    </Taskbar>
  );
}

function App() {
  return (
    <Screen>
      <GlobalStyle />
      <Desktop>
        <Behind>
          <Band $height={25} $color="#f6f6f6" />
          <Band $height={25} $color="#2b579a" />
          <Band $height={92} $color="linear-gradient(90deg, #f2f2f2, #d4d4d4)" />
          <Band $height={22} $color="#cfcfcf" />
          <Fill />
          <Band $height={21} $color="#2b579a" />
        </Behind>
        <Window>
          <Header />
          <RibbonTabs>
            {ribbonTabs.map((tab, i) => (
              <RibbonTab key={tab} $active={i === 0}>{tab}</RibbonTab>
            ))}
            <RibbonToggle aria-label="Minimize ribbon">
              <Svg w={14} h={9}><rect width="14" height="9" rx="2" fill="#e6e6e6" /><path d="M4 6h6L7 3z" fill="#333" /></Svg>
              <Arrow />
            </RibbonToggle>
          </RibbonTabs>
          <RibbonPanels />
          <FileTabs>
            <FileTab><FileTabName>Start</FileTabName></FileTab>
            <FileTab $active>
              <FileTabName>Drawing1*</FileTabName>
              <button aria-label="Close tab"><Svg w={8}><path d="M1 1l6 6M7 1L1 7" stroke="#3c3c3c" strokeWidth="2" /></Svg></button>
            </FileTab>
            <AddFileTab aria-label="New tab"><Svg w={8}><path d="M0 4h8M4 0v8" stroke="#ccc" strokeWidth="2" /></Svg></AddFileTab>
          </FileTabs>
          <Workspace />
          <Bottom />
        </Window>
        <Behind $right>
          <Band $height={25} $color="linear-gradient(90deg, #ccc, #f2f2f2)" />
          <Band $height={25} $color="#a3a3a3" />
          <Band $height={92} $color="linear-gradient(90deg, #ccc, #f2f2f2)" />
          <Band $height={1} $color="#b5b5b5" />
          <Fill />
          <Band $height={22} $color="#2b579a" />
        </Behind>
      </Desktop>
      <SystemBar />
    </Screen>
  );
}

export default App;
